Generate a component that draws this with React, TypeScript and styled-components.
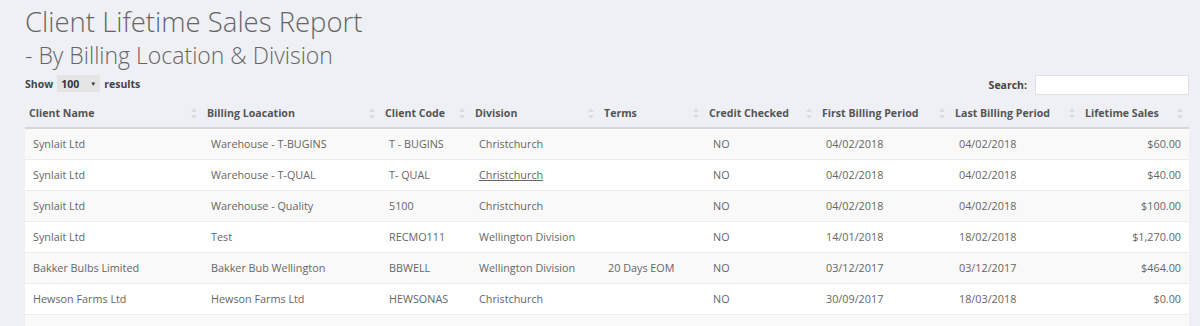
import React from 'react';
import styled, { createGlobalStyle } from 'styled-components';

const GlobalStyle = createGlobalStyle`
  html, body {
    margin: 0;
    padding: 0;
    background: #eff0f5;
    font-family: 'Open Sans', 'Liberation Sans', sans-serif;
    color: #666;
  }
`;

const Page = styled.div`
  padding: 4px 11px 0 25px;
`;

const Title = styled.h1`
  margin: 0;
  font-size: 27.5px;
  font-weight: 300;
  line-height: 36px;
  color: #666;
`;

const SubTitle = styled.h2`
  margin: 0;
  font-size: 23px;
  font-weight: 300;
  line-height: 30px;
  color: #666;
`;

const Controls = styled.div`
  display: flex;
  justify-content: space-between;
  align-items: flex-end;
  margin-top: 5px;
  height: 21px;
`;

const Label = styled.label`
  display: flex;
  align-items: center;
  gap: 4px;
  font-size: 10.5px;
  font-weight: 700;
  color: #444;
  align-self: flex-start;
`;

const SelectBox = styled.span`
  display: inline-flex;
  align-items: center;
  justify-content: space-between;
  width: 43px;
  height: 17px;
  padding: 0 4px;
  box-sizing: border-box;
  background: #e4e4e4;
  color: #333;
  font-weight: 700;
  font-size: 10.5px;

  &::after {
    content: '▼';
    font-size: 6px;
    color: #333;
  }
`;

const SearchInput = styled.input`
  width: 154px;
  height: 20px;
  box-sizing: border-box;
  border: 1px solid #e2e2e2;
  background: #fff;
  margin-left: 4px;
`;

const Table = styled.table`
  width: 1164px;
  border-collapse: collapse;
  table-layout: fixed;
  margin-top: 2px;
  font-size: 10.8px;
`;

const Th = styled.th<{ $w: number }>`
  position: relative;
  width: ${(p) => p.$w}px;
  height: 30px;
  box-sizing: border-box;
  padding: 0 18px 0 4px;
  text-align: left;
  font-weight: 700;
  font-size: 10.6px;
  color: #555;
  border-bottom: 2px solid #d6d6d6;
  white-space: nowrap;
`;

const SortIcon = styled.svg`
  position: absolute;
  right: 6px;
  top: 10px;
`;

const Row = styled.tr<{ $odd: boolean }>`
  background: ${(p) => (p.$odd ? '#f9f9f9' : '#ffffff')};
`;

const Td = styled.td<{ $right?: boolean }>`
  height: 31px;
  box-sizing: border-box;
  padding: 0 8px;
  border-top: 1px solid #ececec;
  text-align: ${(p) => (p.$right ? 'right' : 'left')};
  color: #666;
  white-space: nowrap;
`;

const Link = styled.span`
  text-decoration: underline;
`;

const columns = [
  { title: 'Client Name', w: 178 },
  { title: 'Billing Loacation', w: 178 },
  { title: 'Client Code', w: 90 },
  { title: 'Division', w: 129 },
  { title: 'Terms', w: 105 },
  { title: 'Credit Checked', w: 113 },
  { title: 'First Billing Period', w: 133 },
  { title: 'Last Billing Period', w: 130 },
  { title: 'Lifetime Sales', w: 108 },
];

const rows = [
  ['Synlait Ltd', 'Warehouse - T-BUGINS', 'T - BUGINS', 'Christchurch', '', 'NO', '04/02/2018', '04/02/2018', '$60.00'],
  ['Synlait Ltd', 'Warehouse - T-QUAL', 'T- QUAL', 'Christchurch', '', 'NO', '04/02/2018', '04/02/2018', '$40.00'],
  ['Synlait Ltd', 'Warehouse - Quality', '5100', 'Christchurch', '', 'NO', '04/02/2018', '04/02/2018', '$100.00'],
  ['Synlait Ltd', 'Test', 'RECMO111', 'Wellington Division', '', 'NO', '14/01/2018', '18/02/2018', '$1,270.00'],
  ['Bakker Bulbs Limited', 'Bakker Bub Wellington', 'BBWELL', 'Wellington Division', '20 Days EOM', 'NO', '03/12/2017', '03/12/2017', '$464.00'],
  ['Hewson Farms Ltd', 'Hewson Farms Ltd', 'HEWSONAS', 'Christchurch', '', 'NO', '30/09/2017', '18/03/2018', '$0.00'],
  ['', '', '', '', '', '', '', '', ''],
];

function Sort() {
  return (
    <SortIcon width="6" height="11" viewBox="0 0 6 11">
      <path d="M3 0 L6 4 L0 4 Z" fill="#dcdcdc" />
      <path d="M3 11 L6 7 L0 7 Z" fill="#dcdcdc" />
    </SortIcon>
  );
}

export default function App() {
  return (
    <Page>
      <GlobalStyle />
      <Title>Client Lifetime Sales Report</Title>
      <SubTitle>- By Billing Location &amp; Division</SubTitle>
      <Controls>
        <Label>
          Show <SelectBox>100</SelectBox> results
        </Label>
        <Label>
          Search:
          <SearchInput type="text" />
        </Label>
      </Controls>
      <Table>
        <thead>
          <tr>
            {columns.map((c) => (
              <Th key={c.title} $w={c.w}>
                {c.title}
                <Sort />
              </Th>
            ))}
          </tr>
        </thead>
        <tbody>
          {rows.map((r, i) => (
            <Row key={i} $odd={i % 2 === 0}>
              {r.map((cell, j) => (
                <Td key={j} $right={j === 8}>
                  {i === 1 && j === 3 ? <Link>{cell}</Link> : cell}
                </Td>
              ))}
            </Row>
          ))}
        </tbody>
      </Table>
    </Page>
  );
}
